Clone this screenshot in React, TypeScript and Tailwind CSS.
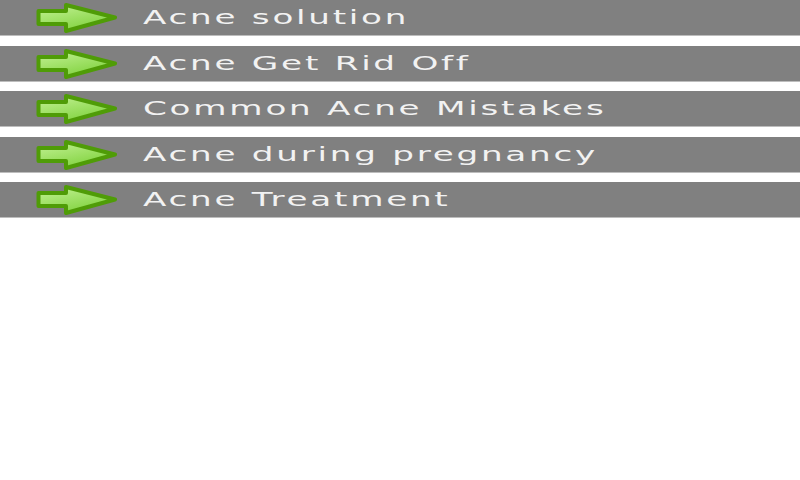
const items = [
  "Acne solution",
  "Acne Get Rid Off",
  "Common Acne Mistakes",
  "Acne during pregnancy",
  "Acne Treatment",
];

function GreenArrow() {
  return (
    <svg width="82" height="31" viewBox="0 0 82 31" className="shrink-0">
      <defs>
        <linearGradient id="arrowFill" x1="0" y1="0" x2="0.6" y2="1">
          <stop offset="0" stopColor="#c4f296" />
          <stop offset="1" stopColor="#80d23e" />
        </linearGradient>
      </defs>
      <path
        d="M2.5 9 H30 V3 L79 15.5 L30 29 V22 H2.5 Z"
        fill="url(#arrowFill)"
        stroke="#4f9c07"
        strokeWidth="4"
        strokeLinejoin="round"
      />
    </svg>
  );
}

export default function App() {
  return (
    <div className="w-[800px] h-[480px] bg-white overflow-hidden font-['DejaVu_Sans',sans-serif]">
      <div className="flex flex-col gap-[9.5px]">
        {items.map((label) => (
          <div
            key={label}
            className="h-[36px] bg-[#808080] border-b border-[#bdbdbd] flex items-center"
          >
            <div className="pl-[36px] w-[143px]">
              <GreenArrow />
            </div>
            <span className="inline-block origin-left scale-x-[1.8] text-[19px] text-[#f2f2f2] tracking-[0.08em] leading-none">
              {label}
            </span>
          </div>
        ))}
      </div>
    </div>
  );
}
